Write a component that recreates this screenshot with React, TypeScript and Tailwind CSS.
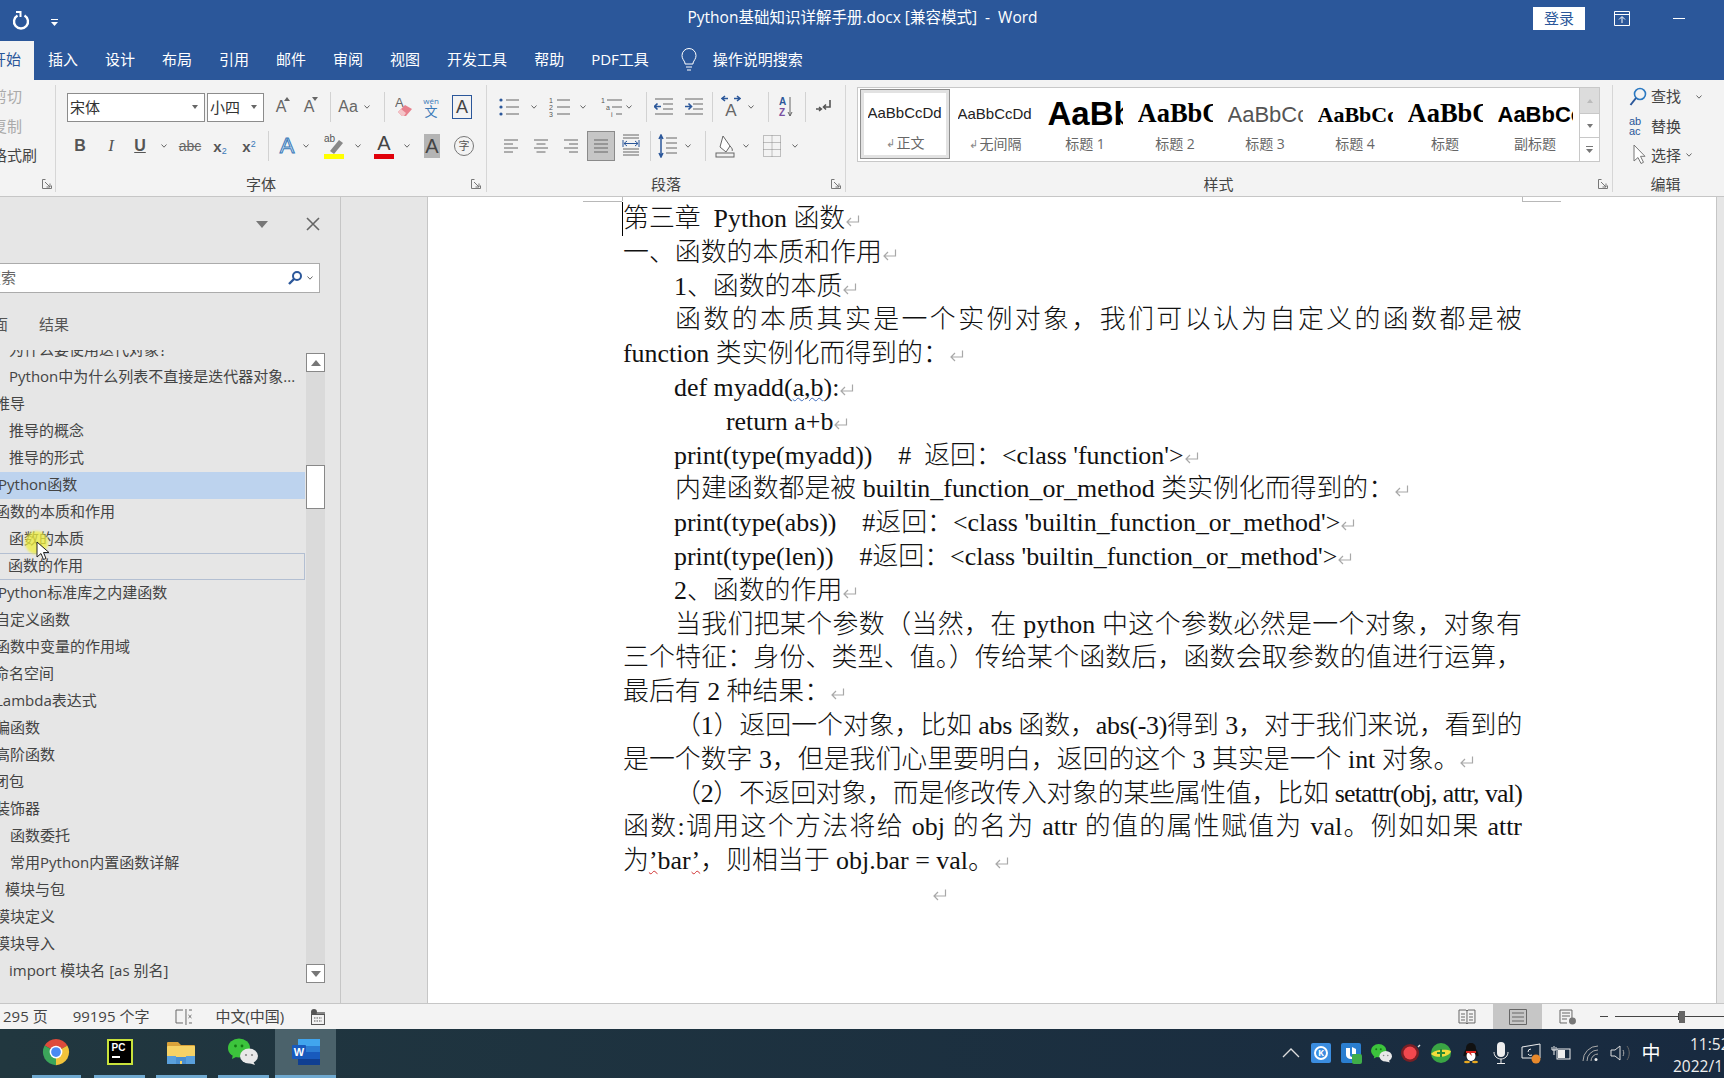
import type { ReactNode } from 'react';

const CJK = '[font-family:"Open_Sans","Noto_Sans_CJK_SC",sans-serif]';

const Chev = ({ className = '' }: { className?: string }) => (
  <svg width="8" height="6" viewBox="0 0 8 6" className={`shrink-0 ${className}`}>
    <path d="M1.5 1.5 4 4.2 6.5 1.5" fill="none" stroke="#666" strokeWidth="1" />
  </svg>
);

const Box = ({ className = '', children }: { className?: string; children?: ReactNode }) => (
  <div className={`w-6 h-[30px] shrink-0 flex items-center justify-center relative ${className}`}>{children}</div>
);

const Sep = ({ className = '' }: { className?: string }) => <div className={`w-px h-[30px] shrink-0 bg-[#d2d2d2] ${className}`} />;

const Launcher = ({ className = '' }: { className?: string }) => (
  <svg width="10" height="10" viewBox="0 0 10 10" className={`absolute bottom-[3px] ${className}`}>
    <path d="M.5 9.5V.5h3M.5 9.5h9v-3" fill="none" stroke="#777" />
    <path d="M3 3l5 5M8 4.5V8H4.5" fill="none" stroke="#777" />
  </svg>
);

const Ret = ({ className = '' }: { className?: string }) => (
  <svg width="15" height="14" viewBox="0 0 15 14" className={`inline-block align-[-1px] ${className}`}>
    <path d="M13.5 1.5v6.5H2M6 4 2 8l4 4" fill="none" stroke="#a8a8a8" strokeWidth="1.2" />
  </svg>
);

// list style icons, lines on the right and a marker column on the left
const Bullets = () => (
  <svg width="22" height="20" viewBox="0 0 22 20">
    <g fill="#2b579a"><circle cx="3" cy="3" r="1.6" /><circle cx="3" cy="10" r="1.6" /><circle cx="3" cy="17" r="1.6" /></g>
    <path d="M8 3h13M8 10h13M8 17h13" stroke="#666" strokeWidth="1.2" />
  </svg>
);
const Numbers = () => (
  <svg width="22" height="20" viewBox="0 0 22 20">
    <g fontSize="7" fill="#555" fontFamily="Liberation Sans"><text x="0" y="6">1</text><text x="0" y="13">2</text><text x="0" y="20">3</text></g>
    <path d="M8 3h13M8 10h13M8 17h13" stroke="#666" strokeWidth="1.2" />
  </svg>
);
const Multi = () => (
  <svg width="22" height="20" viewBox="0 0 22 20">
    <g fontSize="7" fill="#555" fontFamily="Liberation Sans"><text x="0" y="6">1</text><text x="5" y="13">a</text><text x="10" y="20">i</text></g>
    <path d="M6 3h15M11 10h10M15 17h6" stroke="#666" strokeWidth="1.2" />
  </svg>
);
const Dent = ({ flip }: { flip?: boolean }) => (
  <svg width="20" height="20" viewBox="0 0 20 20">
    <path d="M1 2h18M9 7h10M9 12h10M1 17h18" stroke="#666" strokeWidth="1.2" />
    {flip ? <path d="M1 9.5h6M4.5 6.5l3 3-3 3" fill="none" stroke="#2b579a" strokeWidth="1.6" /> : <path d="M7 9.5H1M3.5 6.5l-3 3 3 3" fill="none" stroke="#2b579a" strokeWidth="1.6" />}
  </svg>
);
const Align = ({ v }: { v: 'l' | 'c' | 'r' | 'j' }) => {
  const d = {
    l: 'M1 2h14M1 6h9M1 10h14M1 14h9',
    c: 'M1 2h14M3.5 6h9M1 10h14M3.5 14h9',
    r: 'M1 2h14M6 6h9M1 10h14M6 14h9',
    j: 'M1 2h14M1 6h14M1 10h14M1 14h14',
  }[v];
  return (
    <svg width="16" height="16" viewBox="0 0 16 16">
      <path d={d} stroke="#666" strokeWidth="1" />
    </svg>
  );
};

const Letter = ({ className = '', children }: { className?: string; children: ReactNode }) => (
  <span className={`[font-family:"Liberation_Sans",sans-serif] leading-none ${className}`}>{children}</span>
);

const FontGroup = () => (
  <div className="w-[431px] h-[107px] shrink-0 border-r border-[#d6d6d6] relative pt-[7px]">
    <div className="flex items-center h-[30px] pl-[11px]">
      <div className="w-[138px] h-[29px] shrink-0 bg-white border border-[#8c8c8c] flex items-center justify-between pl-[2px] pr-[6px] text-[15px] text-[#333]">
        宋体
        <svg width="6" height="4" viewBox="0 0 6 4"><path d="M0 0h6L3 4z" fill="#666" /></svg>
      </div>
      <div className="w-[57px] h-[29px] shrink-0 ml-[2px] bg-white border border-[#8c8c8c] flex items-center justify-between pl-[2px] pr-[6px] text-[15px] text-[#333]">
        小四
        <svg width="6" height="4" viewBox="0 0 6 4"><path d="M0 0h6L3 4z" fill="#666" /></svg>
      </div>
      <Box className="ml-[5px]">
        <Letter className="text-[16px] text-[#666]">A</Letter>
        <svg width="6" height="4" viewBox="0 0 6 4" className="absolute top-[5px] right-[3px]"><path d="M3 0l3 4H0z" fill="#666" /></svg>
      </Box>
      <Box className="ml-[4px]">
        <Letter className="text-[16px] text-[#666]">A</Letter>
        <svg width="6" height="4" viewBox="0 0 6 4" className="absolute top-[5px] right-[3px]"><path d="M0 0h6L3 4z" fill="#666" /></svg>
      </Box>
      <Sep className="ml-[9px]" />
      <Box className="ml-[5px]"><Letter className="text-[16px] text-[#666]">Aa</Letter></Box>
      <Chev className="ml-[3px]" />
      <Sep className="ml-[13px]" />
      <Box className="ml-[8px]">
        <svg width="20" height="22" viewBox="0 0 20 22">
          <text x="0" y="11" fontSize="13" fill="#666" fontFamily="Liberation Sans">A</text>
          <path d="M3 16l7-7 7 4-6 7H7z" fill="#e8808c" />
          <path d="M3 16l3-3 5 4-2 3H7z" fill="#f4c4c8" />
        </svg>
      </Box>
      <Box className="ml-[2px]">
        <span className="flex flex-col items-center leading-none text-[#3a79b8]">
          <span className="text-[8px] leading-[9px]">wén</span>
          <span className="text-[13px] leading-[13px]">文</span>
        </span>
      </Box>
      <Box className="ml-[7px]">
        <span className="w-[20px] h-[24px] border border-[#2b579a] flex items-center justify-center">
          <Letter className="text-[18px] text-[#444]">A</Letter>
        </span>
      </Box>
    </div>
    <div className="flex items-center h-[30px] mt-[9px]">
      <Box className="ml-[12px]"><Letter className="text-[16px] font-bold text-[#555]">B</Letter></Box>
      <Box className="ml-[7px]"><span className="[font-family:'Liberation_Serif',serif] italic text-[17px] text-[#555]">I</span></Box>
      <Box className="ml-[5px]"><Letter className="text-[16px] font-bold underline text-[#555]">U</Letter></Box>
      <Chev className="ml-[8px]" />
      <Box className="ml-[10px]"><Letter className="text-[14px] line-through text-[#666]">abc</Letter></Box>
      <Box className="ml-[6px]"><Letter className="text-[15px] font-bold text-[#555]">x<sub className="text-[9px] font-normal text-[#3a79b8]">2</sub></Letter></Box>
      <Box className="ml-[5px]"><Letter className="text-[15px] font-bold text-[#555]">x<sup className="text-[9px] font-normal text-[#3a79b8]">2</sup></Letter></Box>
      <Sep className="ml-[7px]" />
      <Box className="ml-[6px]"><span className="[font-family:'Liberation_Sans',sans-serif] text-[22px] leading-none text-[#cfe3f5] [-webkit-text-stroke:1px_#3a79b8]">A</span></Box>
      <Chev className="ml-[3px]" />
      <Box className="ml-[12px]">
        <svg width="22" height="26" viewBox="0 0 22 26">
          <text x="1" y="9" fontSize="10" fill="#555" fontFamily="Liberation Sans">ab</text>
          <path d="M7 18l9-11 4 3-9 11z" fill="#888" />
          <rect x="1" y="21" width="20" height="5" fill="#ffff00" />
        </svg>
      </Box>
      <Chev className="ml-[8px]" />
      <Box className="ml-[10px]">
        <span className="flex flex-col items-center">
          <Letter className="text-[20px] text-[#444]">A</Letter>
          <span className="w-[20px] h-[5px] mt-[1px] bg-[#e0000a]" />
        </span>
      </Box>
      <Chev className="ml-[7px]" />
      <Box className="ml-[9px]">
        <span className="w-[16px] h-[24px] bg-[#b4b4b4] flex items-center justify-center">
          <Letter className="text-[20px] text-[#444]">A</Letter>
        </span>
      </Box>
      <Box className="ml-[8px]">
        <span className="w-[20px] h-[20px] rounded-full border border-[#777] flex items-center justify-center text-[11px] text-[#555]">字</span>
      </Box>
    </div>
    <div className="mt-[13px] h-[20px] leading-[20px] text-center text-[15px] text-[#444] pr-[20px]">字体</div>
    <Launcher className="right-[5px]" />
  </div>
);

const ParaGroup = () => (
  <div className="w-[359px] h-[107px] shrink-0 border-r border-[#d6d6d6] relative pt-[7px]">
    <div className="flex items-center h-[30px]">
      <Box className="ml-[10px]"><Bullets /></Box>
      <Chev className="ml-[9px]" />
      <Box className="ml-[10px]"><Numbers /></Box>
      <Chev className="ml-[7px]" />
      <Box className="ml-[13px]"><Multi /></Box>
      <Chev className="ml-[1px]" />
      <Sep className="ml-[13px]" />
      <Box className="ml-[5px]"><Dent /></Box>
      <Box className="ml-[6px]"><Dent flip /></Box>
      <Sep className="ml-[6px]" />
      <Box className="ml-[6px]">
        <span className="flex flex-col items-center">
          <svg width="20" height="7" viewBox="0 0 20 7"><path d="M1 3.5h6M4 1 1 3.5 4 6M13 3.5h6M16 1l3 2.5L16 6" fill="none" stroke="#2b579a" strokeWidth="1.5" /></svg>
          <Letter className="text-[17px] text-[#666]">A</Letter>
        </span>
      </Box>
      <Chev className="ml-[4px]" />
      <Sep className="ml-[13px]" />
      <Box className="ml-[5px]">
        <span className="flex flex-col text-[10px] leading-[11px] [font-family:'Liberation_Sans',sans-serif]">
          <span className="text-[#2b579a] font-bold">A</span>
          <span className="text-[#7a4fa0] font-bold">Z</span>
        </span>
        <svg width="6" height="20" viewBox="0 0 6 20" className="ml-[1px]"><path d="M3 0v19M1 15l2 4 2-4" fill="none" stroke="#666" /></svg>
      </Box>
      <Sep className="ml-[7px]" />
      <Box className="ml-[6px]">
        <svg width="18" height="16" viewBox="0 0 18 16"><path d="M15 1v7H9M11 5.5 8.5 8 11 10.5" fill="none" stroke="#555" strokeWidth="1.6" /><path d="M1 10h5M4 8l2.5 2L4 12" fill="none" stroke="#555" strokeWidth="1.4" /></svg>
      </Box>
    </div>
    <div className="flex items-center h-[30px] mt-[9px]">
      <Box className="ml-[12px]"><Align v="l" /></Box>
      <Box className="ml-[6px]"><Align v="c" /></Box>
      <Box className="ml-[6px]"><Align v="r" /></Box>
      <div className="w-7 h-[30px] ml-[4px] shrink-0 flex items-center justify-center bg-[#c6c6c6] border border-[#8a8a8a]"><Align v="j" /></div>
      <Box className="ml-[4px]">
        <svg width="18" height="24" viewBox="0 0 18 24">
          <path d="M1 1h16M1 4h16M1 15h16M1 18h16M1 21h16" stroke="#666" />
          <path d="M1 6v7M17 6v7M2 9.5h14M5 7 2 9.5 5 12M13 7l3 2.5-3 2.5" fill="none" stroke="#2b579a" />
        </svg>
      </Box>
      <Sep className="ml-[7px]" />
      <Box className="ml-[5px]">
        <svg width="20" height="24" viewBox="0 0 20 24">
          <path d="M3 1v22M1 5l2-4 2 4M1 19l2 4 2-4" fill="none" stroke="#2b579a" strokeWidth="1.5" />
          <path d="M8 4h11M8 9h11M8 14h11M8 19h11" stroke="#666" />
        </svg>
      </Box>
      <Chev className="ml-[4px]" />
      <Sep className="ml-[13px]" />
      <Box className="ml-[7px]">
        <svg width="20" height="24" viewBox="0 0 20 24">
          <path d="M8 2 15 12 11 18 5 13z" fill="#fff" stroke="#666" />
          <path d="M15 12c2 2 3 4 2 5" fill="none" stroke="#666" />
          <rect x="1" y="19" width="18" height="4" fill="#f0f0f0" stroke="#666" />
        </svg>
      </Box>
      <Chev className="ml-[5px]" />
      <Box className="ml-[10px]">
        <svg width="18" height="22" viewBox="0 0 18 22">
          <path d="M.5.5h17v21H.5zM9 .5v21M.5 7.5h17M.5 14.5h17" fill="none" stroke="#888" strokeDasharray="1 1" />
        </svg>
      </Box>
      <Chev className="ml-[7px]" />
    </div>
    <div className="mt-[13px] h-[20px] leading-[20px] text-center text-[15px] text-[#444]">段落</div>
    <Launcher className="right-[4px]" />
  </div>
);

const styleItems = [
  { label: '正文', ret: true, cls: '[font-family:"Liberation_Sans",sans-serif] text-[15px] text-[#222]' },
  { label: '无间隔', ret: true, cls: '[font-family:"Liberation_Sans",sans-serif] text-[15px] text-[#222]' },
  { label: '标题 1', cls: '[font-family:"Liberation_Sans",sans-serif] text-[33px] font-bold text-black' },
  { label: '标题 2', cls: '[font-family:"Liberation_Serif",serif] text-[26.5px] font-bold text-black' },
  { label: '标题 3', cls: '[font-family:"Liberation_Sans",sans-serif] text-[22px] text-[#555]' },
  { label: '标题 4', cls: '[font-family:"Liberation_Serif",serif] text-[22px] font-bold text-black' },
  { label: '标题', cls: '[font-family:"Liberation_Serif",serif] text-[26.5px] font-bold text-black' },
  { label: '副标题', cls: '[font-family:"Liberation_Sans",sans-serif] text-[22px] font-bold text-black' },
];

const StylesGroup = () => (
  <div className="w-[767px] h-[107px] shrink-0 border-r border-[#d6d6d6] relative pt-[2px]">
    <div className="ml-[11px] flex h-[75px]">
      <div className="w-[723px] shrink-0 bg-white border border-[#c8c8c8] pl-[2px] flex">
        {styleItems.map((s, i) => (
          <div key={s.label} className={`w-[90px] shrink-0 flex flex-col items-center ${i === 0 ? 'mt-[1px] h-[70px] border border-[#8f8f8f] shadow-[inset_0_0_0_3px_#e2e2e2]' : 'mt-[2px]'}`}>
            <div className={`w-[76px] h-[44px] flex items-center justify-center overflow-hidden whitespace-nowrap ${i === 0 ? 'mt-[1px]' : 'mt-[2px]'}`}>
              <span className={`${s.cls} inline-block w-[75px] overflow-hidden`}>AaBbCcDd</span>
            </div>
            <div className="text-[14px] leading-[18px] text-[#666] flex items-center gap-[2px] -mt-[1px]">
              {s.ret && <span className="text-[11px] text-[#888]">↲</span>}
              {s.label}
            </div>
          </div>
        ))}
      </div>
      <div className="w-5 shrink-0 flex flex-col border-y border-r border-[#c8c8c8]">
        <div className="h-[25px] bg-[#dcdcdc] flex items-center justify-center"><svg width="6" height="4" viewBox="0 0 6 4"><path d="M3 0l3 4H0z" fill="#bbb" /></svg></div>
        <div className="h-[25px] bg-white border-y border-[#c8c8c8] flex items-center justify-center"><svg width="6" height="4" viewBox="0 0 6 4"><path d="M0 0h6L3 4z" fill="#777" /></svg></div>
        <div className="flex-1 bg-white flex items-center justify-center"><svg width="7" height="7" viewBox="0 0 7 7"><path d="M0 0h7v1H0zM0 3h7L3.5 7z" fill="#777" /></svg></div>
      </div>
    </div>
    <div className="mt-[12px] h-[20px] leading-[20px] text-center text-[15px] text-[#444] pr-[21px]">样式</div>
    <Launcher className="right-[4px]" />
  </div>
);

const EditGroup = () => (
  <div className="flex-1 h-[107px] text-[15px] text-[#444] -mt-[3px]">
    <div className="flex items-center h-[29px] ml-[16px]">
      <svg width="18" height="20" viewBox="0 0 18 20"><circle cx="11" cy="7" r="5.5" fill="none" stroke="#2b79c2" strokeWidth="1.6" /><path d="M7 11 1.5 18" stroke="#2b579a" strokeWidth="2" /></svg>
      <span className="ml-[4px]">查找</span>
      <Chev className="ml-[14px]" />
    </div>
    <div className="flex items-center h-[30px] ml-[16px]">
      <span className="w-[18px] flex flex-col text-[11px] leading-[10px] text-[#2b579a] [font-family:'Liberation_Sans',sans-serif]"><span>ab</span><span>ac</span></span>
      <span className="ml-[4px]">替换</span>
    </div>
    <div className="flex items-center h-[28px] ml-[16px]">
      <svg width="18" height="22" viewBox="0 0 18 22"><path d="M5 1v16l4-3.5 3 6 2.5-1.2-3-6H16z" fill="#fff" stroke="#777" /></svg>
      <span className="ml-[4px]">选择</span>
      <Chev className="ml-[4px]" />
    </div>
    <div className="mt-[5px] h-[20px] leading-[20px] text-center pr-[6px]">编辑</div>
  </div>
);

const navRows = [
  { t: '为什么要使用迭代对象？', c: 'ml-[8px]' },
  { t: 'Python中为什么列表不直接是迭代器对象...', c: 'ml-[8px]' },
  { t: '推导', c: '-ml-[6px]' },
  { t: '推导的概念', c: 'ml-[8px]' },
  { t: '推导的形式', c: 'ml-[8px]' },
  { t: 'Python函数', c: '-ml-[3px]', sel: true },
  { t: '函数的本质和作用', c: '-ml-[6px]' },
  { t: '函数的本质', c: 'ml-[8px]' },
  { t: '函数的作用', c: 'ml-[8px]', hover: true },
  { t: 'Python标准库之内建函数', c: '-ml-[3px]' },
  { t: '自定义函数', c: '-ml-[6px]' },
  { t: '函数中变量的作用域', c: '-ml-[6px]' },
  { t: '命名空间', c: '-ml-[7px]' },
  { t: 'Lambda表达式', c: '-ml-[6px]' },
  { t: '偏函数', c: '-ml-[6px]' },
  { t: '高阶函数', c: '-ml-[6px]' },
  { t: '闭包', c: '-ml-[7px]' },
  { t: '装饰器', c: '-ml-[6px]' },
  { t: '函数委托', c: 'ml-[9px]' },
  { t: '常用Python内置函数详解', c: 'ml-[9px]' },
  { t: '模块与包', c: 'ml-[4px]' },
  { t: '模块定义', c: '-ml-[6px]' },
  { t: '模块导入', c: '-ml-[6px]' },
  { t: 'import 模块名 [as 别名]', c: 'ml-[8px]' },
];

const NavPane = () => (
  <div className={`w-[341px] shrink-0 border-r border-[#c6c6c6] bg-[#e6e6e6] flex flex-col ${CJK}`}>
    <div className="h-[53px] shrink-0 flex items-center justify-end pr-[20px] pt-[1px]">
      <svg width="12" height="7" viewBox="0 0 12 7"><path d="M0 0h12L6 7z" fill="#777" /></svg>
      <svg width="14" height="14" viewBox="0 0 14 14" className="ml-[38px]"><path d="M1 1l12 12M13 1 1 13" stroke="#666" strokeWidth="1.6" /></svg>
    </div>
    <div className="h-[30px] w-[320px] mt-[13px] shrink-0 bg-white border border-l-0 border-[#ababab] flex items-center justify-between pr-[5px] text-[15px] text-[#666]">
      <span className="-ml-[14px] -mt-[2px]">搜索</span>
      <span className="flex items-center gap-[3px]">
        <svg width="16" height="16" viewBox="0 0 16 16"><circle cx="10" cy="6" r="4" fill="none" stroke="#2b579a" strokeWidth="2" /><path d="M7 9 2 14" stroke="#2b579a" strokeWidth="2.4" /></svg>
        <Chev />
      </span>
    </div>
    <div className="h-[30px] mt-[16px] shrink-0 flex items-center text-[15px] text-[#555]">
      <span className="-ml-[7px]">面</span>
      <span className="ml-[31px]">结果</span>
    </div>
    <div className="mt-[11px] flex-1 min-h-0 flex">
      <div className="w-[305px] h-[635px] shrink-0 overflow-hidden">
        <div className="-mt-[13px] text-[15px] text-[#444]">
          {navRows.map((r) => (
            <div key={r.t} className={`h-[27px] leading-[23px] whitespace-nowrap border ${r.sel ? 'bg-[#bdd3ee] border-transparent' : r.hover ? 'border-[#b3bfd2] border-l-0' : 'border-transparent'}`}>
              <span className={`inline-block ${r.c}`}>{r.t}</span>
            </div>
          ))}
        </div>
      </div>
      <div className="w-[19px] ml-[1px] mt-[3px] h-[630px] shrink-0 bg-[#dadada] flex flex-col">
        <div className="h-[19px] shrink-0 bg-white border border-[#888] flex items-center justify-center"><svg width="10" height="6" viewBox="0 0 10 6"><path d="M5 0l5 6H0z" fill="#777" /></svg></div>
        <div className="h-[44px] mt-[93px] shrink-0 bg-white border border-[#888]" />
        <div className="flex-1" />
        <div className="h-[19px] shrink-0 bg-white border border-[#888] flex items-center justify-center"><svg width="10" height="6" viewBox="0 0 10 6"><path d="M0 0h10L5 6z" fill="#777" /></svg></div>
      </div>
    </div>
  </div>
);

const Doc = () => {
  const line = 'h-[33.8px] leading-[33.8px] whitespace-pre';
  const just = 'h-[33.8px] leading-[33.8px] whitespace-nowrap text-justify [text-align-last:justify]';
  return (
    <div className="relative w-[1289px] shrink-0 bg-white border-r border-[#c6c6c6] pl-[195px] pt-[5px] overflow-hidden">
      <div className="absolute left-[155px] top-[4px] w-[39px] h-px bg-[#b8b8b8]" />
      <div className="absolute left-[194px] top-0 w-px h-[4px] bg-[#b8b8b8]" />
      <div className="absolute left-[194px] top-[5px] w-px h-[34px] bg-black" />
      <div className="absolute left-[1094px] top-[4px] w-[39px] h-px bg-[#b8b8b8]" />
      <div className="absolute left-[1094px] top-0 w-px h-[4px] bg-[#b8b8b8]" />
      <div className='w-[899px] text-[25.9px] text-[#111] font-light [font-family:"Liberation_Serif","Noto_Sans_CJK_SC",serif]'>
        <div className={line}>第三章  Python 函数<Ret /></div>
        <div className={line}>一、函数的本质和作用<Ret /></div>
        <div className={`${line} pl-[51px]`}>1、函数的本质<Ret /></div>
        <div className={`${just} pl-[52px]`}>函数的本质其实是一个实例对象，我们可以认为自定义的函数都是被</div>
        <div className={line}>function 类实例化而得到的：<Ret /></div>
        <div className={`${line} pl-[51px]`}>def myadd(<span className="underline decoration-wavy decoration-1 decoration-[#3f6fbf]">a,b</span>):<Ret /></div>
        <div className={`${line} pl-[103px]`}>return a+b<Ret /></div>
        <div className={`${line} pl-[51px]`}>print(type(myadd))    #  返回：&lt;class 'function'&gt;<Ret /></div>
        <div className={`${line} pl-[52px]`}>内建函数都是被 builtin_function_or_method 类实例化而得到的：<Ret /></div>
        <div className={`${line} pl-[51px]`}>print(type(abs))    #返回：&lt;class 'builtin_function_or_method'&gt;<Ret /></div>
        <div className={`${line} pl-[51px]`}>print(type(len))    #返回：&lt;class 'builtin_function_or_method'&gt;<Ret /></div>
        <div className={`${line} pl-[51px]`}>2、函数的作用<Ret /></div>
        <div className={`${just} pl-[52px]`}>当我们把某个参数（当然，在 python 中这个参数必然是一个对象，对象有</div>
        <div className={`${just} tracking-[-0.2px]`}>三个特征：身份、类型、值。）传给某个函数后，函数会取参数的值进行运算，</div>
        <div className={line}>最后有 2 种结果：<Ret /></div>
        <div className={`${just} pl-[52px] tracking-[-0.3px]`}>（1）返回一个对象，比如 abs 函数，abs(-3)得到 3，对于我们来说，看到的</div>
        <div className={line}>是一个数字 3，但是我们心里要明白，返回的这个 3 其实是一个 int 对象。<Ret /></div>
        <div className={`${just} pl-[52px] tracking-[-0.8px]`}>（2）不返回对象，而是修改传入对象的某些属性值，比如 setattr(obj, attr, val)</div>
        <div className={just}>函数:调用这个方法将给 obj 的名为 attr 的值的属性赋值为 val。例如如果 attr</div>
        <div className={line}>为<span className="underline decoration-wavy decoration-1 decoration-[#d03030]">’</span>bar<span className="underline decoration-wavy decoration-1 decoration-[#d03030]">’</span>，则相当于 obj.bar = val。<Ret /></div>
        <div className={`${line} pl-[309px] -mt-[2px]`}><Ret /></div>
      </div>
    </div>
  );
};

const Chrome = () => (
  <svg width="30" height="30" viewBox="0 0 32 32">
    <path d="M16 16 3.9 9A14 14 0 0 1 28.1 9z" fill="#de4b3b" />
    <path d="M16 16 28.1 9A14 14 0 0 1 16 30z" fill="#f2c33b" />
    <path d="M16 16V30A14 14 0 0 1 3.9 9z" fill="#3ba55a" />
    <circle cx="16" cy="16" r="6.8" fill="#fff" />
    <circle cx="16" cy="16" r="5.2" fill="#4a8af4" />
  </svg>
);

const Pycharm = () => (
  <div className="w-[26px] h-[26px] bg-black border-2 border-[#c8e23c] flex flex-col pl-[3px] pt-[1px] text-white font-bold text-[10px] leading-[12px] [font-family:'Liberation_Sans',sans-serif]">
    PC
    <span className="w-[8px] h-[2px] mt-[2px] bg-white" />
  </div>
);

const Folder = () => (
  <svg width="28" height="24" viewBox="0 0 28 24">
    <path d="M0 3a1 1 0 0 1 1-1h10l3 3h13a1 1 0 0 1 1 1v6H0z" fill="#d9a23a" />
    <rect y="6" width="28" height="18" rx="1" fill="#f6d265" />
    <path d="M9 24v-7h10v7h-4v-3h-2v3z" fill="#4a8fd0" />
    <rect y="16" width="9" height="8" fill="#5aa0dc" />
    <rect x="19" y="16" width="9" height="8" fill="#5aa0dc" />
  </svg>
);

const Wechat = ({ s = 30 }: { s?: number }) => (
  <svg width={s} height={s} viewBox="0 0 30 30">
    <ellipse cx="11" cy="11" rx="11" ry="9.5" fill="#3cc43c" />
    <path d="M5 17l-1 5 6-3z" fill="#3cc43c" />
    <circle cx="7.5" cy="9" r="1.4" fill="#137a13" />
    <circle cx="14" cy="9" r="1.4" fill="#137a13" />
    <ellipse cx="21" cy="19" rx="9" ry="7.5" fill="#e8e8e8" />
    <path d="M25 24l2 4-6-2z" fill="#e8e8e8" />
    <circle cx="18" cy="18" r="1.1" fill="#888" />
    <circle cx="24" cy="18" r="1.1" fill="#888" />
  </svg>
);

const WordIcon = () => (
  <svg width="30" height="30" viewBox="0 0 30 30">
    <rect x="7" y="2" width="22" height="26" rx="1" fill="#2b7cd3" />
    <rect x="7" y="2" width="22" height="7" fill="#41a5ee" />
    <rect x="7" y="15" width="22" height="7" fill="#185abd" />
    <rect x="7" y="22" width="22" height="6" fill="#103f91" />
    <rect x="1" y="8" width="14" height="14" rx="1" fill="#185abd" />
    <text x="8" y="19" textAnchor="middle" fontSize="11" fontWeight="bold" fill="#fff" fontFamily="Liberation Sans">W</text>
  </svg>
);

const apps = [
  { w: 'w-[49px] ml-[32px] pr-[2px]', icon: <Chrome />, },
  { w: 'w-[51px] ml-[13px]', icon: <Pycharm /> },
  { w: 'w-[51px] ml-[11px] pr-[2px]', icon: <Folder /> },
  { w: 'w-[51px] ml-[11px] pr-[2px]', icon: <Wechat /> },
];

const Tray = ({ children, className = '' }: { children: ReactNode; className?: string }) => (
  <div className={`w-[30px] h-[30px] flex items-center justify-center shrink-0 relative ${className}`}>{children}</div>
);

const Taskbar = () => (
  <div className={`h-[49px] shrink-0 bg-linear-to-r from-[#21373f] to-[#182a40] flex items-stretch overflow-hidden ${CJK}`}>
    {apps.map((a, i) => (
      <div key={i} className={`${a.w} shrink-0 flex items-center justify-center border-b-[3px] border-[#6fa9d0]`}>{a.icon}</div>
    ))}
    <div className="w-[61px] ml-[6px] shrink-0 flex items-center justify-center bg-[#4b626b] border-b-[3px] border-[#6fa9d0]"><WordIcon /></div>
    <div className="flex items-center ml-[940px] shrink-0 pb-[1px] pl-[0px]">
      <Tray>
        <svg width="18" height="10" viewBox="0 0 18 10"><path d="M1 9l8-8 8 8" fill="none" stroke="#ddd" strokeWidth="1.3" /></svg>
      </Tray>
      <Tray>
        <span className="w-[20px] h-[20px] rounded-[2px] bg-[#3b8de0] flex items-center justify-center">
          <span className="w-[14px] h-[14px] rounded-full border-2 border-white text-white text-[9px] leading-[10px] font-bold text-center">K</span>
        </span>
      </Tray>
      <Tray>
        <span className="w-[20px] h-[20px] rounded-[2px] bg-[#2a7ed0] relative flex items-center justify-center">
          <svg width="14" height="14" viewBox="0 0 14 14"><path d="M2 2h4v7c0 1 1 2 2 2h4v2H7c-3 0-5-2-5-4zM8 1l4 2v5H8z" fill="#fff" /></svg>
          <span className="absolute -right-[1px] -bottom-[1px] w-[10px] h-[10px] rounded-[2px] bg-[#3fae49]" />
        </span>
      </Tray>
      <Tray><Wechat s={21} /></Tray>
      <Tray>
        <svg width="22" height="22" viewBox="0 0 22 22"><circle cx="10" cy="11" r="9" fill="#7a1f24" /><circle cx="10" cy="11" r="6.5" fill="#f2484e" /><path d="M20 3l-2 2" stroke="#ddd" strokeWidth="1.5" /></svg>
      </Tray>
      <Tray>
        <svg width="22" height="22" viewBox="0 0 22 22"><circle cx="11" cy="11" r="10" fill="#3aa544" /><path d="M1 12c4-5 16-5 20-3-1 6-15 8-20 3z" fill="#f3dc3c" /><path d="M11 7v8M7 11h8" stroke="#2a8a36" strokeWidth="2" /></svg>
      </Tray>
      <Tray>
        <svg width="18" height="22" viewBox="0 0 18 22"><path d="M9 1c3.5 0 5 2.5 5 6 1.5 2.5 3 5 2.5 7-1 .5-2-.5-2-1 0 3-1.5 5-5.5 5s-5.5-2-5.5-5c0 .5-1 1.5-2 1C1 12 2.5 9.5 4 7c0-3.5 1.500-6 5-6z" fill="#111" /><ellipse cx="9" cy="14" rx="4.5" ry="5" fill="#fff" /><path d="M4 9h10v2H9l1 3-3-3H4z" fill="#d8241e" /><ellipse cx="5" cy="20" rx="3" ry="1.3" fill="#e8a820" /><ellipse cx="13" cy="20" rx="3" ry="1.3" fill="#e8a820" /></svg>
      </Tray>
      <Tray>
        <svg width="16" height="24" viewBox="0 0 16 24"><rect x="4" y="1" width="8" height="15" rx="4" fill="#eee" /><path d="M1 11c0 4 3 7 7 7s7-3 7-7M8 18v4M4 22.5h8" fill="none" stroke="#eee" /></svg>
      </Tray>
      <Tray>
        <svg width="22" height="22" viewBox="0 0 22 22"><path d="M2 5l18-3v14H2z" fill="none" stroke="#eee" /><path d="M11 7a3 3 0 0 0-3 3M8 12a3 3 0 0 0 4 1" fill="none" stroke="#eee" /><circle cx="16" cy="17" r="4.5" fill="#e8892c" /></svg>
      </Tray>
      <Tray>
        <svg width="20" height="14" viewBox="0 0 20 14"><rect x="6" y="3" width="13" height="10" fill="none" stroke="#eee" /><rect x="7" y="4" width="7" height="8" fill="#eee" /><path d="M3 0v4M1 1v3h4V1M3 4v5" fill="none" stroke="#eee" /></svg>
      </Tray>
      <Tray>
        <svg width="20" height="18" viewBox="0 0 20 18"><path d="M2 17a15 15 0 0 1 15-15M6 17A11 11 0 0 1 17 6M10 17a7 7 0 0 1 7-7" fill="none" stroke="#aaa" /><circle cx="15" cy="15.5" r="1.5" fill="#eee" /></svg>
      </Tray>
      <Tray>
        <svg width="22" height="18" viewBox="0 0 22 18"><path d="M1 6h4l5-4v14l-5-4H1z" fill="none" stroke="#ddd" /><path d="M13 6c1 2 1 4 0 6" fill="none" stroke="#aaa" /><path d="M17 2c3 4 3 10 0 14" fill="none" stroke="#666" /></svg>
      </Tray>
      <Tray><span className="text-[19px] text-white">中</span></Tray>
      <div className="flex flex-col text-[#eee] text-[15.5px] leading-[22px] ml-[7px] whitespace-nowrap pt-[3px]">
        <span className="ml-[17px]">11:52</span>
        <span>2022/1</span>
      </div>
    </div>
  </div>
);

const tabs = ['插入', '设计', '布局', '引用', '邮件', '审阅', '视图', '开发工具', '帮助', 'PDF工具'];

export default function App() {
  return (
    <div className={`relative w-[1724px] h-[1078px] overflow-hidden flex flex-col bg-[#e6e6e6] ${CJK}`}>
      <div className="h-[80px] shrink-0 bg-[#2b579a] text-white flex flex-col">
        <div className="h-[41px] grid grid-cols-[1fr_auto_1fr] items-center">
          <div className="flex items-center pl-[12px]">
            <svg width="18" height="20" viewBox="0 0 18 20">
              <path d="M5.5 4.5a7 7 0 1 0 7 0" fill="none" stroke="#fff" strokeWidth="2.4" />
              <path d="M4 1h4.5v5" fill="none" stroke="#fff" strokeWidth="2" />
            </svg>
            <svg width="7" height="7" viewBox="0 0 7 7" className="ml-[21px] mt-[3px]"><path d="M0 0h7v1H0zM0 3h7L3.5 7z" fill="#fff" /></svg>
          </div>
          <div className="text-[15.5px] leading-[24px] whitespace-pre -mt-[7px] ml-[1px]">Python基础知识详解手册.docx [兼容模式]  -  Word</div>
          <div className="flex items-center justify-end pr-[39px] -mt-[4px]">
            <div className="w-[52px] h-[23px] bg-white text-[#2b579a] text-[15px] leading-[23px] text-center">登录</div>
            <svg width="16" height="15" viewBox="0 0 16 15" className="ml-[29px]"><path d="M.5.5h15v14H.5zM.5 3.5h15M8 12V6M5 8.5 8 5.5l3 3" fill="none" stroke="#fff" /></svg>
            <div className="w-[12px] h-px bg-white ml-[43px]" />
          </div>
        </div>
        <div className="h-[39px] flex items-stretch text-[15px] leading-[36px] whitespace-nowrap">
          <div className="w-[34px] shrink-0 bg-[#f3f3f3] text-[#2b579a] overflow-hidden"><span className="inline-block -ml-[9px]">开始</span></div>
          <div className="flex gap-[27px] ml-[14px]">
            {tabs.map((t) => <span key={t}>{t}</span>)}
          </div>
          <svg width="18" height="24" viewBox="0 0 18 24" className="ml-[31px] mt-[7px]"><path d="M5 15c-1-3-3-4-3-7.5a7 7 0 0 1 14 0C16 11 14 12 13 15v1H5zM6 19h6M7 22h4" fill="none" stroke="#fff" /></svg>
          <span className="ml-[15px]">操作说明搜索</span>
        </div>
      </div>

      <div className="h-[117px] shrink-0 bg-[#f3f3f3] border-b border-[#c6c6c6] flex pt-[5px]">
        <div className="w-[56px] h-[107px] shrink-0 border-r border-[#d6d6d6] text-[15px] text-[#aaa] leading-[29.5px] relative overflow-hidden">
          <div className="-ml-[8px] -mt-[3px] whitespace-nowrap">
            <div>剪切</div>
            <div>复制</div>
            <div className="text-[#444]">格式刷</div>
          </div>
          <Launcher className="right-[3px]" />
        </div>
        <FontGroup />
        <ParaGroup />
        <StylesGroup />
        <EditGroup />
      </div>

      <div className="flex-1 min-h-0 flex">
        <NavPane />
        <div className="w-[87px] shrink-0 bg-[#e6e6e6] border-r border-[#c6c6c6]" />
        <Doc />
      </div>

      <div className="h-[26px] shrink-0 bg-[#f3f3f3] border-t border-[#c6c6c6] flex items-center text-[15px] text-[#444] whitespace-nowrap">
        <span className="ml-[3px]">295 页</span>
        <span className="ml-[25px]">99195 个字</span>
        <svg width="18" height="16" viewBox="0 0 18 16" className="ml-[26px]"><path d="M8 1H1v13h7M11 0v16M14 1h3M14 14h3M13.5 6l3 3M16.5 6l-3 3" fill="none" stroke="#666" /></svg>
        <span className="ml-[22px]">中文(中国)</span>
        <svg width="16" height="16" viewBox="0 0 16 16" className="ml-[26px]"><circle cx="4" cy="3" r="3" fill="#555" /><rect x="1.5" y="5.5" width="13" height="10" fill="none" stroke="#555" /><path d="M1 3h14v3H1z" fill="#555" opacity=".7" /><path d="M4 9h8M4 12h8" stroke="#555" strokeDasharray="1.5 1" /></svg>
        <svg width="18" height="16" viewBox="0 0 18 16" className="ml-[1132px]"><path d="M1 1h7l1 1 1-1h7v13h-7l-1 1-1-1H1zM9 2v13M3 5h4M3 8h4M3 11h4M11 5h4M11 8h4M11 11h4" fill="none" stroke="#666" /></svg>
        <div className="w-[49px] h-[25px] ml-[17px] bg-[#c6c6c6] flex items-center justify-center">
          <svg width="18" height="16" viewBox="0 0 18 16"><path d="M.5.5h17v15H.5zM3 4h12M3 8h12M3 12h12" fill="none" stroke="#666" /></svg>
        </div>
        <svg width="18" height="16" viewBox="0 0 18 16" className="ml-[17px]"><path d="M1 1h12v9M1 1v13h7M3 4h8M3 7h8M3 10h5" fill="none" stroke="#666" /><circle cx="13.5" cy="12" r="3.5" fill="#777" /></svg>
        <div className="w-[8px] h-px bg-[#444] ml-[23px]" />
        <div className="relative w-[109px] h-px bg-[#444] ml-[7px] shrink-0">
          <div className="absolute left-[64px] -top-[5px] w-[6px] h-[12px] bg-[#666]" />
          <div className="absolute left-[63px] -top-[3px] w-px h-[7px] bg-[#444]" />
        </div>
      </div>

      <Taskbar />

      {/* click highlight and mouse pointer from the recording */}
      <div className="absolute left-[25px] top-[531px] w-[23px] h-[23px] rounded-full bg-[#eeee3c]/75 blur-[1px]" />
      <svg width="14" height="20" viewBox="0 0 14 20" className="absolute left-[36px] top-[541px]">
        <path d="M1 1v15l4-3.5 2.5 6 2.5-1-2.5-6H13z" fill="#fff" stroke="#222" />
      </svg>
    </div>
  );
}
